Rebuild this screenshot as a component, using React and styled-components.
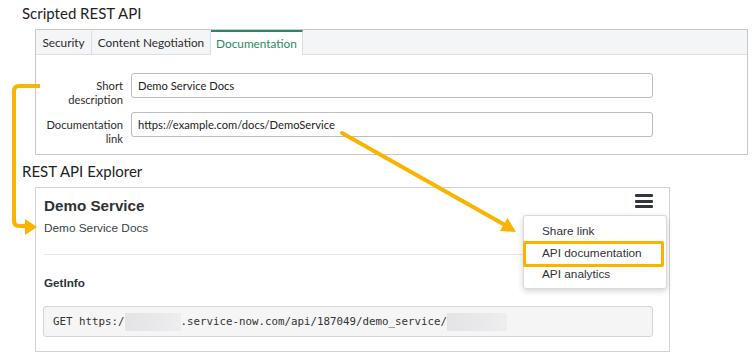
import React from 'react';
import styled, { createGlobalStyle } from 'styled-components';

const GlobalStyle = createGlobalStyle`
  html, body {
    margin: 0;
    padding: 0;
    background: #ffffff;
  }
  * {
    box-sizing: border-box;
  }
`;

const ORANGE = '#fab400';

const Page = styled.div`
  position: relative;
  width: 753px;
  height: 361px;
  overflow: hidden;
  display: flex;
  flex-direction: column;
  font-family: Lato, 'Open Sans', sans-serif;
  color: #333;
`;

const SectionTitle = styled.h1`
  margin: 0;
  padding-left: 22px;
  height: ${(p) => p.$h}px;
  line-height: ${(p) => p.$lh}px;
  font-size: 15px;
  font-weight: 400;
  color: #222;
`;

const FormPanel = styled.div`
  margin-left: 35px;
  width: 713px;
  height: 126px;
  border: 1px solid #c8c8c8;
  display: flex;
  flex-direction: column;
`;

const TabBar = styled.div`
  display: flex;
  height: 25px;
  background: #f4f5f7;
  border-bottom: 1px solid #dedfe3;
`;

const Tab = styled.div`
  width: ${(p) => p.$w}px;
  display: flex;
  align-items: center;
  justify-content: center;
  font-size: 11.8px;
  border-right: 1px solid #dcdde1;
  color: ${(p) => (p.$active ? '#278a62' : '#2b2b2b')};
  background: ${(p) => (p.$active ? '#ffffff' : 'transparent')};
  border-top: 2px solid ${(p) => (p.$active ? '#278a62' : 'transparent')};
  margin-bottom: ${(p) => (p.$active ? '-1px' : '0')};
  padding-bottom: 1px;
`;

const Form = styled.div`
  display: flex;
  flex-direction: column;
  gap: 4px;
  padding-top: 18px;
`;

const FieldRow = styled.div`
  display: flex;
  align-items: flex-start;
  gap: 8px;
  height: 35px;
`;

const FieldLabel = styled.label`
  width: 87px;
  padding-top: 6px;
  text-align: right;
  font-size: 11.2px;
  line-height: 14px;
  color: #2b2b2b;
`;

const TextInput = styled.div`
  width: 522px;
  height: 25px;
  border: 1px solid #b9bcc2;
  border-radius: 3px;
  padding-left: 6px;
  display: flex;
  align-items: center;
  font-size: 11.2px;
  color: #222;
`;

const ExplorerPanel = styled.div`
  position: relative;
  margin-left: 35px;
  width: 635px;
  height: 165px;
  border: 1px solid #d2d2d2;
  padding: 0 16px 0 7px;
  display: flex;
  flex-direction: column;
  font-family: 'Liberation Sans', Arial, sans-serif;
  color: #333;
`;

const ExplorerHeader = styled.div`
  display: flex;
  align-items: center;
  justify-content: space-between;
  height: 20px;
  margin-top: 7px;
  padding-left: 1px;
`;

const ServiceName = styled.h2`
  margin: 0;
  font-size: 15.2px;
  font-weight: 700;
  color: #2e3338;
`;

const MenuButton = styled.div`
  width: 18px;
  height: 14px;
  display: flex;
  flex-direction: column;
  justify-content: space-between;
  margin-top: -8px;
`;

const MenuBar = styled.span`
  display: block;
  height: 3px;
  border-radius: 1px;
  background: #30363c;
`;

const ServiceDocs = styled.p`
  margin: 0;
  padding-left: 1px;
  height: 27px;
  line-height: 26px;
  font-size: 11.8px;
  color: #3a3f44;
`;

const Divider = styled.hr`
  margin: 12px 0 0 1px;
  border: 0;
  border-top: 1px solid #e6e6e6;
`;

const MethodTitle = styled.h3`
  margin: 20px 0 0 1px;
  height: 16px;
  line-height: 16px;
  font-size: 11.7px;
  font-weight: 700;
  color: #2e3338;
`;

const CodeBox = styled.div`
  margin-top: 15px;
  height: 31px;
  background: #f5f5f5;
  border: 1px solid #d6d6d6;
  border-radius: 3px;
  padding-left: 9px;
  display: flex;
  align-items: center;
  font-family: 'DejaVu Sans Mono', 'Liberation Mono', monospace;
  font-size: 10.8px;
  color: #333;
  white-space: pre;
`;

const Redacted = styled.span`
  display: inline-block;
  width: ${(p) => p.$w}px;
  height: 18px;
  background: linear-gradient(90deg, #e4e4e6 0%, #e9e9eb 60%, #eeeef0 100%);
  border-radius: 1px;
`;

const Menu = styled.ul`
  position: absolute;
  left: 487px;
  top: 27px;
  width: 144px;
  height: 74px;
  margin: 0;
  padding: 5px 0 0;
  list-style: none;
  background: #ffffff;
  border: 1px solid #d9d9d9;
  border-radius: 3px;
  box-shadow: 0 2px 6px rgba(0, 0, 0, 0.18);
  z-index: 2;
`;

const MenuItem = styled.li`
  position: relative;
  height: 21.5px;
  line-height: 21.5px;
  padding-left: 18px;
  font-size: 11.8px;
  color: #333;

  ${(p) =>
    p.$highlight &&
    `
    &::after {
      content: '';
      position: absolute;
      left: -1px;
      right: 2px;
      top: -2px;
      bottom: -3px;
      border: 3px solid ${ORANGE};
      border-radius: 2px;
    }
  `}
`;

const Annotations = styled.svg`
  position: absolute;
  left: 0;
  top: 0;
  width: 753px;
  height: 361px;
  pointer-events: none;
  z-index: 5;
`;

export default function App() {
  return (
    <>
      <GlobalStyle />
      <Page>
        <SectionTitle $h={29} $lh={26}>Scripted REST API</SectionTitle>
        <FormPanel>
          <TabBar>
            <Tab $w={56}>Security</Tab>
            <Tab $w={119}>Content Negotiation</Tab>
            <Tab $w={92} $active>Documentation</Tab>
          </TabBar>
          <Form>
            <FieldRow>
              <FieldLabel>Short<br />description</FieldLabel>
              <TextInput>Demo Service Docs</TextInput>
            </FieldRow>
            <FieldRow>
              <FieldLabel>Documentation<br />link</FieldLabel>
              <TextInput>https://example.com/docs/DemoService</TextInput>
            </FieldRow>
          </Form>
        </FormPanel>
        <SectionTitle $h={32} $lh={32}>REST API Explorer</SectionTitle>
        <ExplorerPanel>
          <ExplorerHeader>
            <ServiceName>Demo Service</ServiceName>
            <MenuButton>
              <MenuBar />
              <MenuBar />
              <MenuBar />
            </MenuButton>
          </ExplorerHeader>
          <ServiceDocs>Demo Service Docs</ServiceDocs>
          <Divider />
          <MethodTitle>GetInfo</MethodTitle>
          <CodeBox>
            GET https:/<Redacted $w={56} />.service-now.com/api/187049/demo_service/<Redacted $w={60} />
          </CodeBox>
          <Menu>
            <MenuItem>Share link</MenuItem>
            <MenuItem $highlight>API documentation</MenuItem>
            <MenuItem>API analytics</MenuItem>
          </Menu>
        </ExplorerPanel>

        <Annotations viewBox="0 0 753 361">
          <path
            d="M40 86 H19 Q14 86 14 91 V221 Q14 226 19 226 H27"
            fill="none"
            stroke={ORANGE}
            strokeWidth="4"
          />
          <polygon points="37,227 25,219 25,235" fill={ORANGE} />
          <line x1="342" y1="133" x2="505" y2="225" stroke={ORANGE} strokeWidth="4" strokeLinecap="round" />
          <polygon points="516,232 500,231 507.5,218" fill={ORANGE} />
        </Annotations>
      </Page>
    </>
  );
}
